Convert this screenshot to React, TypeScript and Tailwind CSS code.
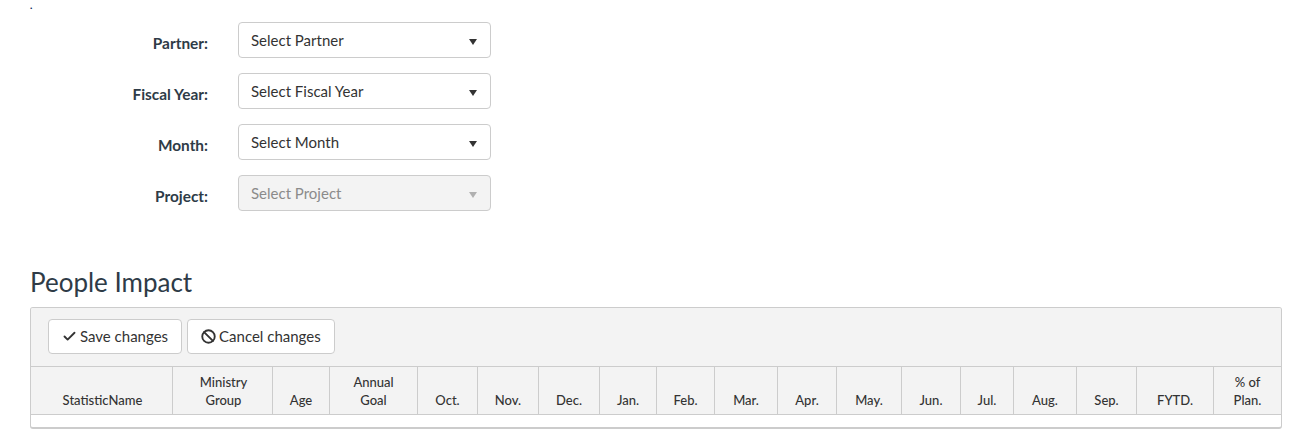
import { Ban, Check } from 'lucide-react';

const FILTERS = [
  { label: 'Partner:', placeholder: 'Select Partner' },
  { label: 'Fiscal Year:', placeholder: 'Select Fiscal Year' },
  { label: 'Month:', placeholder: 'Select Month' },
  { label: 'Project:', placeholder: 'Select Project', disabled: true },
];

const COLUMNS = [
  { title: 'StatisticName', width: 'w-[142px] pl-[9px] pr-[7px]' },
  { title: 'Ministry Group', width: 'w-[100px] pl-[9px] pr-[7px]' },
  { title: 'Age', width: 'w-[57px] px-[8px]' },
  { title: 'Annual|Goal', width: 'w-[88px] px-[8px]' },
  { title: 'Oct.', width: 'w-[60px] px-[8px]' },
  { title: 'Nov.', width: 'w-[61px] px-[8px]' },
  { title: 'Dec.', width: 'w-[61px] px-[8px]' },
  { title: 'Jan.', width: 'w-[57px] px-[8px]' },
  { title: 'Feb.', width: 'w-[58px] px-[8px]' },
  { title: 'Mar.', width: 'w-[63px] px-[8px]' },
  { title: 'Apr.', width: 'w-[59px] px-[8px]' },
  { title: 'May.', width: 'w-[65px] px-[8px]' },
  { title: 'Jun.', width: 'w-[59px] px-[8px]' },
  { title: 'Jul.', width: 'w-[53px] px-[8px]' },
  { title: 'Aug.', width: 'w-[63px] px-[8px]' },
  { title: 'Sep.', width: 'w-[60px] px-[8px]' },
  { title: 'FYTD.', width: 'w-[77px] px-[8px]' },
  { title: '% of|Plan.', width: 'flex-1 px-[8px]' },
];

function FilterRow({ label, placeholder, disabled }: { label: string; placeholder: string; disabled?: boolean }) {
  return (
    <div className="flex h-9 items-start">
      <label className="mt-[12px] w-[178px] text-right text-[15.4px] leading-[18px] font-bold text-[#2e3b47]">
        {label}
      </label>
      <div
        className={`ml-[30px] flex h-9 w-[253px] items-center justify-between rounded-[4px] border border-[#ccc] pr-[13px] pl-[12px] text-[15px] ${
          disabled ? 'bg-[#f3f3f3] text-[#8b8b8b]' : 'bg-white text-[#333]'
        }`}
      >
        <span>{placeholder}</span>
        <span
          className={`mt-[3px] h-0 w-0 border-x-[4px] border-t-[6px] border-x-transparent ${
            disabled ? 'border-t-[#b0b0b0]' : 'border-t-[#333]'
          }`}
        />
      </div>
    </div>
  );
}

function ToolbarButton({ icon, label }: { icon: React.ReactNode; label: string }) {
  return (
    <button
      type="button"
      className="flex h-[35px] items-center gap-[3px] rounded-[4px] border border-[#ccc] bg-white px-[13px] text-[15px] text-[#333]"
    >
      {icon}
      {label}
    </button>
  );
}

export default function App() {
  return (
    <div className="h-[437px] w-[1305px] overflow-hidden bg-white font-['Lato','Open_Sans',sans-serif] text-[#333]">
      <div className="h-[22px] pl-[30px] text-[10px] leading-[10px] font-black text-[#0b2a5c]">.</div>

      <div className="flex flex-col gap-[15px] pl-[30px]">
        {FILTERS.map((f) => (
          <FilterRow key={f.label} {...f} />
        ))}
      </div>

      <h2 className="mt-[54px] pb-[1px] pl-[30px] text-[26px] leading-[34px] font-normal text-[#2e3b47]">
        People Impact
      </h2>

      <div className="mt-[7px] ml-[30px] h-[122px] w-[1252px] overflow-hidden rounded-[3px] border border-b-2 border-[#ccc] bg-white">
        <div className="flex h-[59px] gap-[5px] border-b border-[#ccc] bg-[#f3f3f3] pt-[11px] pl-[17px]">
          <ToolbarButton icon={<Check size={15} strokeWidth={3} />} label="Save changes" />
          <ToolbarButton icon={<Ban size={15} strokeWidth={3} />} label="Cancel changes" />
        </div>
        <div className="flex h-[48px] border-b border-[#ccc] bg-[#f3f3f3]">
          {COLUMNS.map((c, i) => (
            <div
              key={c.title}
              className={`flex h-full flex-col justify-end pb-[5px] text-center text-[13px] leading-[18px] font-medium text-[#333] ${c.width} ${
                i < COLUMNS.length - 1 ? 'border-r border-[#ccc]' : ''
              }`}
            >
              {c.title.split('|').map((line) => (
                <span key={line}>{line}</span>
              ))}
            </div>
          ))}
        </div>
      </div>
    </div>
  );
}
